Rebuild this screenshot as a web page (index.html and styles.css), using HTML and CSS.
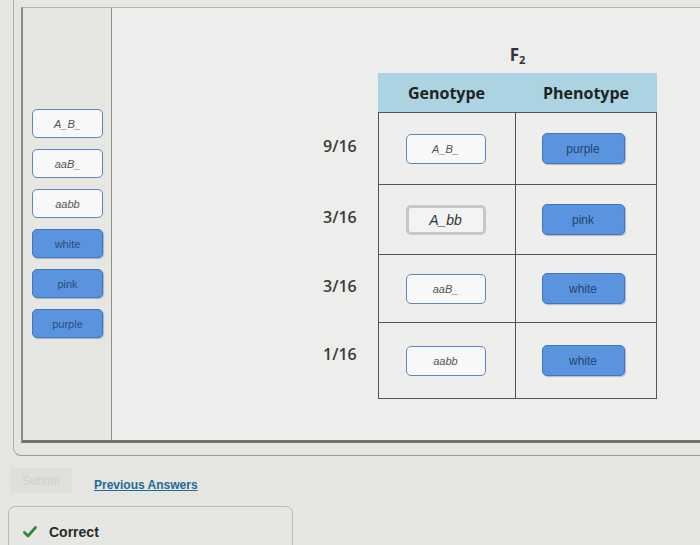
FILE: index.html
```html
<!DOCTYPE html>
<html>
<head>
<meta charset="utf-8">
<link rel="stylesheet" href="styles.css">
</head>
<body>
<div class="outer">
  <div class="inner">
    <div class="bank">
      <div class="chip geno">A_B_</div>
      <div class="chip geno">aaB_</div>
      <div class="chip geno">aabb</div>
      <div class="chip pheno">white</div>
      <div class="chip pheno">pink</div>
      <div class="chip pheno">purple</div>
    </div>
    <div class="work">
      <div class="title">F<sub>2</sub></div>
      <div class="table">
        <div class="frac"></div>
        <div class="head">Genotype</div>
        <div class="head">Phenotype</div>

        <div class="frac">9/16</div>
        <div class="cell"><div class="chip geno">A_B_</div></div>
        <div class="cell right"><div class="chip pheno">purple</div></div>

        <div class="frac">3/16</div>
        <div class="cell"><div class="chip geno sel">A_bb</div></div>
        <div class="cell right"><div class="chip pheno">pink</div></div>

        <div class="frac">3/16</div>
        <div class="cell"><div class="chip geno">aaB_</div></div>
        <div class="cell right"><div class="chip pheno">white</div></div>

        <div class="frac f4">1/16</div>
        <div class="cell last"><div class="chip geno">aabb</div></div>
        <div class="cell right last"><div class="chip pheno">white</div></div>
      </div>
    </div>
  </div>
</div>
<div class="actions">
  <div class="submit">Submit</div>
  <a class="prev" href="#">Previous Answers</a>
</div>
<div class="correct">
  <svg class="check" width="14" height="12" viewBox="0 0 14 12"><path d="M1.5 6.5 L5 10 L12.5 1.5" fill="none" stroke="#2e8b3e" stroke-width="2.8" stroke-linecap="round" stroke-linejoin="round"/></svg>
  <span>Correct</span>
</div>
</body>
</html>
```

FILE: styles.css
```css
html, body {
  margin: 0;
  padding: 0;
}
body {
  width: 700px;
  height: 545px;
  overflow: hidden;
  background: #e5e6e2;
  font-family: "Open Sans", "Liberation Sans", sans-serif;
  color: #333;
}
.outer {
  margin-left: 13px;
  width: 720px;
  height: 456px;
  border-left: 1px solid #a8aaa6;
  border-bottom: 1px solid #9a9c98;
  border-bottom-left-radius: 8px;
  padding: 7px 0 0 7px;
  box-sizing: border-box;
}
.inner {
  display: grid;
  grid-template-columns: 89px 1fr;
  height: 436px;
  border-left: 2px solid #8a8c88;
  border-top: 1px solid #b4b6b2;
  border-bottom: 3px solid #727470;
  background: #ebecea;
  box-sizing: border-box;
}
.bank {
  border-right: 1px solid #8d8f8b;
  background: #e6e7e3;
  display: flex;
  flex-direction: column;
  gap: 11px;
  padding: 101px 0 0 9px;
}
.chip {
  box-sizing: border-box;
  height: 29px;
  border-radius: 5px;
  display: flex;
  align-items: center;
  justify-content: center;
  font-family: "Liberation Sans", Arial, sans-serif;
  font-size: 11px;
}
.bank .chip {
  width: 71px;
}
.geno {
  background: #f7f8f7;
  border: 1.5px solid #5f86bd;
  color: #555;
  font-style: italic;
}
.geno.sel {
  border: 3px solid #c6c7c6;
  color: #333;
  font-size: 14px;
  background: #f2f3f2;
}
.pheno {
  background: #5a94df;
  border: 1px solid #4376c0;
  color: #2c4c7c;
  box-shadow: 1px 1px 1px rgba(60, 80, 120, 0.35);
}
.cell .pheno {
  font-size: 12px;
  color: #27436e;
}
.work {
  padding: 35px 0 0 211px;
  background: #edeeec;
}
.title {
  width: 334px;
  padding-left: 55px;
  box-sizing: border-box;
  text-align: center;
  font-weight: bold;
  font-size: 17px;
  line-height: 24px;
  height: 30px;
  color: #333;
}
.title sub {
  font-size: 11px;
  vertical-align: -3px;
}
.table {
  display: grid;
  grid-template-columns: 55px 137px 142px;
  grid-template-rows: 40px 72px 70px 68px 76px;
}
.frac {
  font-size: 16px;
  font-weight: 600;
  color: #3a3a3a;
  display: flex;
  align-items: center;
  padding-bottom: 6px;
  box-sizing: border-box;
}
.frac.f4 {
  padding-bottom: 14px;
}
.head {
  background: #abd3e2;
  font-weight: bold;
  font-size: 16px;
  color: #222;
  display: flex;
  align-items: center;
  justify-content: center;
  border-bottom: 1.5px solid #555;
  box-sizing: border-box;
}
.cell {
  border-left: 1.5px solid #555;
  border-bottom: 1.5px solid #555;
  background: #eeefed;
  display: flex;
  align-items: center;
  justify-content: center;
  box-sizing: border-box;
  padding-bottom: 0;
}
.cell .geno {
  width: 80px;
  height: 30px;
  margin-left: -3px;
}
.cell.right {
  border-right: 1.5px solid #555;
}
.cell .pheno {
  width: 83px;
  height: 31px;
  margin-left: -6px;
}
.actions {
  display: flex;
  align-items: center;
  margin-top: 12px;
  padding-left: 10px;
  height: 25px;
}
.submit {
  width: 62px;
  height: 25px;
  background: #dfe0dc;
  color: #cfd0cd;
  font-family: "Liberation Sans", Arial, sans-serif;
  font-size: 12px;
  display: flex;
  align-items: center;
  justify-content: center;
}
.prev {
  margin-left: 22px;
  margin-top: 8px;
  font-family: "Liberation Sans", Arial, sans-serif;
  font-weight: bold;
  font-size: 12px;
  color: #1e6a98;
  text-decoration: underline;
}
.correct {
  margin: 13px 0 0 8px;
  width: 285px;
  height: 60px;
  box-sizing: border-box;
  border: 1px solid #b8bab6;
  border-radius: 7px;
  background: #e6e7e3;
  display: flex;
  align-items: flex-start;
  padding: 17px 0 0 14px;
}
.check {
  margin-top: 2px;
}
.correct span {
  margin-left: 12px;
  font-family: "Liberation Sans", Arial, sans-serif;
  font-size: 14px;
  font-weight: bold;
  color: #2a2a2a;
}
```
